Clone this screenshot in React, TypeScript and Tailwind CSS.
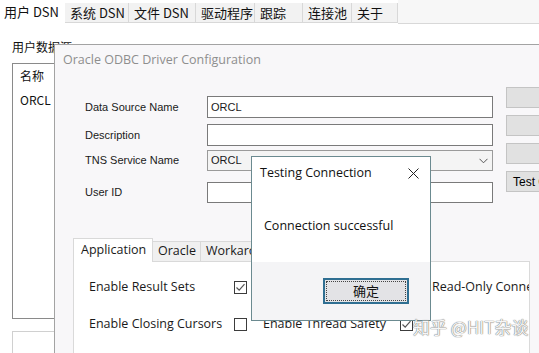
import React from 'react';

const cjk = "font-['Noto_Sans_CJK_SC',sans-serif]";
const classic = "font-['Liberation_Sans',sans-serif]";
const ui = "font-['Open_Sans',sans-serif]";

const topTabs = [
    { label: '系统 DSN', w: 'w-[64px]' },
    { label: '文件 DSN', w: 'w-[67px]' },
    { label: '驱动程序', w: 'w-[59px]' },
    { label: '跟踪', w: 'w-[48px]' },
    { label: '连接池', w: 'w-[49px]' },
    { label: '关于', w: 'w-[46px]' },
];

function Checkbox({ checked }: { checked?: boolean }) {
    return (
        <span className="w-[13px] h-[13px] border border-[#3c3c3c] bg-white flex items-center justify-center shrink-0">
            {checked && (
                <svg width="11" height="11" viewBox="0 0 11 11">
                    <path d="M1.5 5.5 L4.2 8.2 L9.5 2.2" fill="none" stroke="#555" strokeWidth="1.2" />
                </svg>
            )}
        </span>
    );
}

function OracleWindow() {
    return (
        <div className="absolute left-[54px] top-[44px] w-[500px] h-[320px] bg-[#f8f7f9] border-l border-t border-[#a3a3a3]">
            <div className={`h-[30px] flex items-center pl-[8px] text-[12.5px] text-[#8e8e8e] ${ui}`}>
                Oracle ODBC Driver Configuration
            </div>

            <div className="flex items-start">
                {/* form fields */}
                <div className={`shrink-0 pl-[30px] pt-[21px] text-[11px] text-[#1a1a1a] ${classic}`}>
                    <div className="flex items-center">
                        <span className="w-[122px]">Data Source Name</span>
                        <div className="w-[286px] h-[22px] border border-[#7a7a7a] bg-white flex items-center pl-[3px]">ORCL</div>
                    </div>
                    <div className="flex items-center mt-[6px]">
                        <span className="w-[122px]">Description</span>
                        <div className="w-[286px] h-[22px] border border-[#7a7a7a] bg-white" />
                    </div>
                    <div className="flex items-center mt-[4px]">
                        <span className="w-[122px]">TNS Service Name</span>
                        <div className="w-[286px] h-[21px] border border-[#9a9a9a] bg-[#f4f4f4] flex items-center justify-between pl-[3px] pr-[4px]">
                            <span>ORCL</span>
                            <svg width="9" height="6" viewBox="0 0 9 6">
                                <path d="M0.5 0.8 L4.5 4.8 L8.5 0.8" fill="none" stroke="#555" strokeWidth="1" />
                            </svg>
                        </div>
                    </div>
                    <div className="flex items-center mt-[11px]">
                        <span className="w-[122px]">User ID</span>
                        <div className="w-[286px] h-[21px] border border-[#7a7a7a] bg-white" />
                    </div>
                </div>

                {/* right column buttons, cut off by the screen edge */}
                <div className={`shrink-0 ml-[13px] pt-[12px] flex flex-col gap-[7px] ${classic}`}>
                    <div className="w-[60px] h-[21px] bg-[#e1e1e1] border border-[#c4c4c4]" />
                    <div className="w-[60px] h-[21px] bg-[#e1e1e1] border border-[#c4c4c4]" />
                    <div className="w-[60px] h-[21px] bg-[#e1e1e1] border border-[#c4c4c4]" />
                    <div className="w-[60px] h-[21px] bg-[#e1e1e1] border border-[#c4c4c4] flex items-center pl-[6px] text-[12px] whitespace-nowrap overflow-hidden">Test Connection</div>
                </div>
            </div>

            {/* tab control */}
            <div className={`ml-[18px] mt-[35px] w-[457px] text-[12.5px] text-[#1a1a1a] ${ui}`}>
                <div className="flex items-end h-[24px]">
                    <div className="w-[80px] h-[24px] bg-white border-l border-t border-r border-[#d9d9d9] flex items-center pl-[7px]">Application</div>
                    <div className="w-[48px] h-[21px] bg-[#f0f0f0] border-t border-r border-b border-[#d9d9d9] flex items-center pl-[5px]">Oracle</div>
                    <div className="w-[88px] h-[21px] bg-[#f0f0f0] border-t border-r border-b border-[#d9d9d9] flex items-center pl-[5px]">Workarounds</div>
                    <div className="flex-1 border-b border-[#d9d9d9]" />
                </div>
                <div className="h-[120px] bg-white border-l border-r border-[#dadada] pl-[15px] pt-[13px] overflow-hidden">
                    <div className="flex items-center h-[24px] whitespace-nowrap">
                        <span className="w-[145px] shrink-0">Enable Result Sets</span>
                        <Checkbox checked />
                        {/* second column of this row lies under the dialog */}
                        <span className="w-[137px] shrink-0 ml-[16px]" />
                        <Checkbox checked />
                        <span className="shrink-0 ml-[19px]">Read-Only Connection</span>
                    </div>
                    <div className="flex items-center h-[24px] mt-[13px] whitespace-nowrap">
                        <span className="w-[145px] shrink-0">Enable Closing Cursors</span>
                        <Checkbox />
                        <span className="w-[137px] shrink-0 ml-[16px]">Enable Thread Safety</span>
                        <Checkbox checked />
                    </div>
                </div>
            </div>
        </div>
    );
}

function TestingDialog() {
    return (
        <div className={`absolute left-[251px] top-[156px] w-[180px] h-[165px] border border-[#6b8a90] bg-white flex flex-col ${ui}`}>
            <div className="h-[32px] flex items-center justify-between pl-[8px] pr-[11px] text-[12.5px] text-[#111]">
                <span>Testing Connection</span>
                <svg width="11" height="11" viewBox="0 0 11 11">
                    <path d="M0.5 0.5 L10.5 10.5 M10.5 0.5 L0.5 10.5" stroke="#222" strokeWidth="1" />
                </svg>
            </div>
            <div className="h-[73px] pl-[12px] pt-[28px] text-[12.5px] text-[#111] leading-[18px]">
                Connection successful
            </div>
            <div className="flex-1 bg-[#f4f4f6] flex justify-end items-start pt-[16px] pr-[21px]">
                <div className="w-[86px] h-[26px] border-2 border-[#2f6f92] bg-[#e3e3e6] p-[1px]">
                    <div className={`w-full h-full border border-dotted border-[#444] flex items-center justify-center text-[13px] text-[#111] ${cjk}`}>
                        确定
                    </div>
                </div>
            </div>
        </div>
    );
}

export default function App() {
    return (
        <div className={`relative w-[539px] h-[353px] overflow-hidden bg-white ${cjk}`}>
            {/* ODBC administrator tabs */}
            <div className="flex h-[24px] text-[13px] text-[#111]">
                <div className="w-[65px] h-[24px] bg-white flex items-center pl-[4px]">用户 DSN</div>
                {topTabs.map((t) => (
                    <div key={t.label} className={`${t.w} h-[20px] mt-[3px] bg-[#f2f2f2] border-r border-b border-[#d8d8d8] flex items-center pl-[5px]`}>
                        {t.label}
                    </div>
                ))}
                <div className="flex-1 bg-[#f7f7f7] border-b border-[#d8d8d8]" />
            </div>

            <div className="pl-[12px] pt-[16px] text-[12px] text-[#111]">
                <div className="h-[14px] flex items-center">用户数据源</div>
                <div className="mt-[9px] w-[60px] h-[256px] border border-[#8a8a8a] bg-white pl-[7px] pt-[4px]">
                    <div className="h-[16px] flex items-center">名称</div>
                    <div className="h-[16px] mt-[8px] flex items-center">ORCL</div>
                </div>
                <div className="mt-[12px] w-[60px] h-[30px] border-l border-t border-[#d0d0d0]" />
            </div>

            <OracleWindow />
            <TestingDialog />

            {/* watermark */}
            <div className="absolute left-[413px] top-[314px] text-[17px] text-[#f6f6f6] [text-shadow:0_0_1px_#6f6f6f,0_0_1px_#6f6f6f] whitespace-nowrap">
                知乎 @HIT杂谈
            </div>
        </div>
    );
}
